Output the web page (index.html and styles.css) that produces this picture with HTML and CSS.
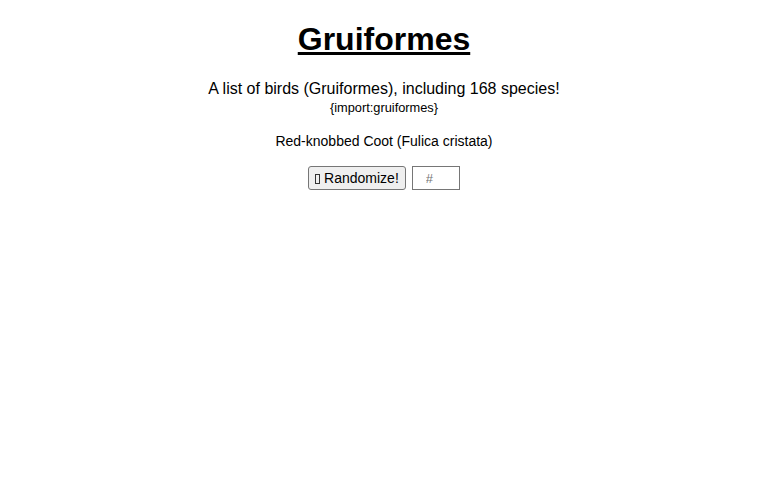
FILE: index.html
```html
<!DOCTYPE html>
<html>
<head>
<meta charset="utf-8">
<link rel="stylesheet" href="styles.css">
</head>
<body>
<main class="page">
  <h1 class="title">Gruiformes</h1>
  <p class="intro">A list of birds (Gruiformes), including 168 species!</p>
  <p class="source">{import:gruiformes}</p>
  <p class="pick">Red-knobbed Coot (Fulica cristata)</p>
  <div class="controls">
    <button class="btn"><span class="tofu"></span> Randomize!</button>
    <input class="num" type="text" placeholder="#">
  </div>
</main>
</body>
</html>
```
FILE: styles.css
```css
body {
  margin: 8px;
  font-family: "Liberation Sans", Arial, sans-serif;
  color: #000;
  background: #fff;
}
.page {
  text-align: center;
}
.title {
  font-size: 32px;
  font-weight: bold;
  text-decoration: underline;
  margin: 13px 0 22px;
}
.intro {
  font-size: 16px;
  margin: 0;
}
.source {
  font-size: 12.8px;
  margin: 2px 0 0;
}
.pick {
  font-size: 14px;
  margin: 18px 0 17px;
}
.controls {
  display: flex;
  justify-content: center;
  gap: 6px;
}
.btn {
  font-family: "Liberation Sans", Arial, sans-serif;
  font-size: 14px;
  padding: 2px 6px;
  height: 24px;
  background: #efefef;
  border: 1px solid #767676;
  border-radius: 3px;
  color: #000;
}
.tofu {
  display: inline-block;
  width: 3px;
  height: 8px;
  border: 1px solid #333;
  vertical-align: -1px;
}
.num {
  width: 48px;
  height: 24px;
  box-sizing: border-box;
  font-family: "Liberation Sans", Arial, sans-serif;
  font-size: 13px;
  padding: 1px 13px;
  border: 1px solid #767676;
}
```
